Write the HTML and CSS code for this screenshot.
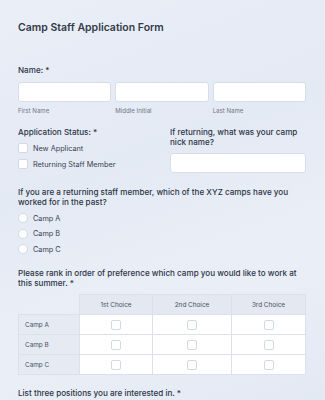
FILE: index.html
```html
<!DOCTYPE html>
<html lang="en">
<head>
  <meta charset="UTF-8" />
  <title>Camp Staff Application Form</title>
  <link rel="stylesheet" href="styles.css">
</head>
<body>
<div class="form">
  <h1 class="title">Camp Staff Application Form</h1>

  <!-- Name -->
  <div class="field name-field">
    <label class="label">Name: *</label>
    <div class="name-row">
      <div class="name-col">
        <input type="text" class="text-input" />
        <span class="sublabel">First Name</span>
      </div>
      <div class="name-col">
        <input type="text" class="text-input" />
        <span class="sublabel">Middle Initial</span>
      </div>
      <div class="name-col">
        <input type="text" class="text-input" />
        <span class="sublabel">Last Name</span>
      </div>
    </div>
  </div>

  <!-- Status + nickname -->
  <div class="two-col">
    <div class="field">
      <label class="label">Application Status: *</label>
      <div class="option"><span class="box"></span>New Applicant</div>
      <div class="option"><span class="box"></span>Returning Staff Member</div>
    </div>
    <div class="field">
      <label class="label">If returning, what was your camp nick name?</label>
      <input type="text" class="text-input" />
    </div>
  </div>

  <!-- Past camps -->
  <div class="field">
    <label class="label">If you are a returning staff member, which of the XYZ camps have you worked for in the past?</label>
    <div class="option radio-opt"><span class="circle"></span>Camp A</div>
    <div class="option radio-opt"><span class="circle"></span>Camp B</div>
    <div class="option radio-opt"><span class="circle"></span>Camp C</div>
  </div>

  <!-- Ranking -->
  <div class="field">
    <label class="label">Please rank in order of preference which camp you would like to work at this summer. *</label>
    <table class="matrix">
      <colgroup>
        <col class="c-head" />
        <col class="c-1" />
        <col class="c-2" />
        <col />
      </colgroup>
      <tr>
        <th class="corner"></th>
        <th>1st Choice</th>
        <th>2nd Choice</th>
        <th>3rd Choice</th>
      </tr>
      <tr>
        <td class="row-head">Camp A</td>
        <td><span class="box"></span></td>
        <td><span class="box"></span></td>
        <td><span class="box"></span></td>
      </tr>
      <tr>
        <td class="row-head">Camp B</td>
        <td><span class="box"></span></td>
        <td><span class="box"></span></td>
        <td><span class="box"></span></td>
      </tr>
      <tr>
        <td class="row-head">Camp C</td>
        <td><span class="box"></span></td>
        <td><span class="box"></span></td>
        <td><span class="box"></span></td>
      </tr>
    </table>
  </div>

  <div class="field">
    <label class="label">List three positions you are interested in. *</label>
  </div>
</div>
</body>
</html>
```
FILE: styles.css
```css
body {
  margin: 0;
  font-family: Inter, 'Noto Sans', sans-serif;
  color: #2c3345;
  background: linear-gradient(160deg, #e9eef7 0%, #e4eaf4 40%, #eaeff7 70%, #e3e9f3 100%);
  height: 400px;
  overflow: hidden;
}
.form {
  padding: 21px 19px 0 18px;
}
.title {
  margin: 0 0 30px 0;
  font-size: 10.5px;
  font-weight: 600;
  line-height: 14px;
  color: #343a48;
}
.field {
  margin-bottom: 13px;
}
.label {
  display: block;
  font-size: 8.1px;
  line-height: 10px;
  font-weight: 500;
  color: #2c3345;
  margin-bottom: 5px;
}
.name-field {
  margin-bottom: 12px;
}
.name-field .label {
  margin-bottom: 7px;
}
.name-row {
  display: flex;
  gap: 4px;
}
.name-col {
  flex: 1;
  display: flex;
  flex-direction: column;
}
.text-input {
  display: block;
  width: 100%;
  height: 20px;
  box-sizing: border-box;
  border: 1px solid #d8dde8;
  border-radius: 3px;
  background: #fff;
  margin: 0;
  padding: 0;
}
.sublabel {
  font-size: 6.1px;
  color: #6f7585;
  margin-top: 5px;
  line-height: 8px;
}
.two-col {
  display: flex;
  gap: 16px;
}
.two-col .field {
  flex: 1;
}
.two-col .field:first-child {
  flex: 0 0 136px;
}
.two-col .field:last-child .label {
  margin-bottom: 6px;
}
.option {
  display: flex;
  align-items: center;
  font-size: 7.3px;
  color: #3a4152;
  height: 12px;
  margin-bottom: 4px;
}
.radio-opt {
  margin-bottom: 3.5px;
}
.box {
  display: inline-block;
  width: 10px;
  height: 10px;
  box-sizing: border-box;
  border: 1px solid #d3d9e4;
  border-radius: 2px;
  background: #fff;
  margin-right: 5px;
}
.circle {
  display: inline-block;
  width: 10px;
  height: 10px;
  box-sizing: border-box;
  border: 1px solid #d3d9e4;
  border-radius: 50%;
  background: #fff;
  margin-right: 5px;
}
.matrix {
  width: 100%;
  border-collapse: collapse;
  table-layout: fixed;
  font-size: 6.4px;
  color: #4a5062;
  margin-top: 6px;
}
.c-head { width: 61px; }
.c-1 { width: 73px; }
.c-2 { width: 79px; }
.matrix th, .matrix td {
  border: 1px solid #dbe0ea;
  height: 19px;
  text-align: center;
  padding: 0;
}
.matrix th {
  background: #e3e8f1;
  font-weight: 400;
}
.matrix th.corner {
  background: transparent;
  border-top-color: transparent;
  border-left-color: transparent;
}
.matrix td {
  background: #fff;
}
.matrix td.row-head {
  background: #e6ebf3;
  text-align: left;
  padding-left: 6px;
}
.matrix td .box {
  margin: 0;
  vertical-align: middle;
}
```
